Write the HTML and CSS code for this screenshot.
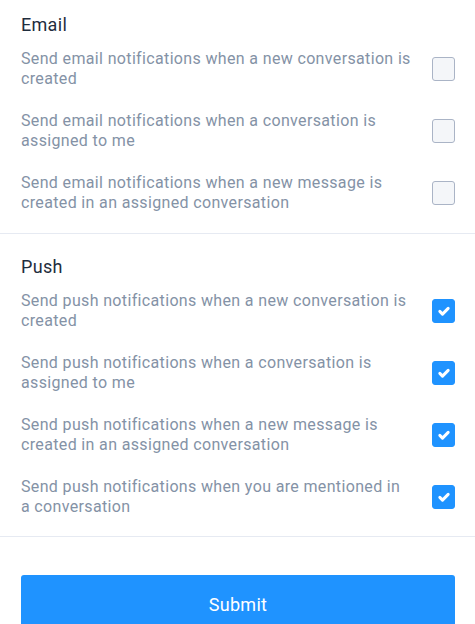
FILE: index.html
```html
<!DOCTYPE html>
<html>
<head>
<meta charset="utf-8">
<link rel="stylesheet" href="styles.css">
</head>
<body>
<section class="group">
  <h2 class="title">Email</h2>
  <label class="row"><span class="text">Send email notifications when a new conversation is created</span><span class="box"></span></label>
  <label class="row"><span class="text">Send email notifications when a conversation is assigned to me</span><span class="box"></span></label>
  <label class="row"><span class="text">Send email notifications when a new message is created in an assigned conversation</span><span class="box"></span></label>
</section>
<section class="group">
  <h2 class="title">Push</h2>
  <label class="row"><span class="text">Send push notifications when a new conversation is created</span><span class="box checked"><svg viewBox="0 0 24 24"><path d="M7 12.5l3.2 3.2 6.8-6.8" /></svg></span></label>
  <label class="row"><span class="text">Send push notifications when a conversation is assigned to me</span><span class="box checked"><svg viewBox="0 0 24 24"><path d="M7 12.5l3.2 3.2 6.8-6.8" /></svg></span></label>
  <label class="row"><span class="text">Send push notifications when a new message is created in an assigned conversation</span><span class="box checked"><svg viewBox="0 0 24 24"><path d="M7 12.5l3.2 3.2 6.8-6.8" /></svg></span></label>
  <label class="row"><span class="text">Send push notifications when you are mentioned in a conversation</span><span class="box checked"><svg viewBox="0 0 24 24"><path d="M7 12.5l3.2 3.2 6.8-6.8" /></svg></span></label>
</section>
<div class="actions">
  <button class="submit">Submit</button>
</div>
</body>
</html>
```

FILE: styles.css
```css
html, body {
  margin: 0;
  padding: 0;
  background: #fff;
  font-family: Roboto, "Liberation Sans", sans-serif;
}
.group {
  padding: 13px 20px 20px 21px;
  border-bottom: 1px solid #e6eaf2;
}
.group + .group {
  padding-top: 21px;
  padding-bottom: 19px;
}
.title {
  margin: 0 0 12px;
  font-size: 18px;
  line-height: 24px;
  font-weight: 400;
  letter-spacing: 0.3px;
  color: #1f2d3d;
}
.row {
  display: flex;
  align-items: center;
  justify-content: space-between;
  gap: 20px;
}
.row + .row {
  margin-top: 22px;
}
.text {
  font-size: 16px;
  line-height: 20px;
  letter-spacing: 0.35px;
  color: #8492a6;
  flex: 1;
}
.box {
  flex: none;
  width: 21px;
  height: 22px;
  border: 1px solid #aab4c6;
  border-radius: 3px;
  background: #f4f6f9;
  display: flex;
  align-items: center;
  justify-content: center;
}
.box.checked {
  background: #1f93ff;
  border-color: #1f93ff;
}
.box svg {
  width: 20px;
  height: 20px;
  fill: none;
  stroke: #fff;
  stroke-width: 3.6;
  stroke-linecap: round;
  stroke-linejoin: round;
}
.actions {
  padding: 38px 20px 0 21px;
}
.submit {
  display: block;
  width: 100%;
  height: 60px;
  border: none;
  border-radius: 3px;
  background: #1f93ff;
  color: #fff;
  font-family: Roboto, "Liberation Sans", sans-serif;
  font-size: 18px;
  letter-spacing: 0.3px;
  padding: 0 0 2px;
}
```
